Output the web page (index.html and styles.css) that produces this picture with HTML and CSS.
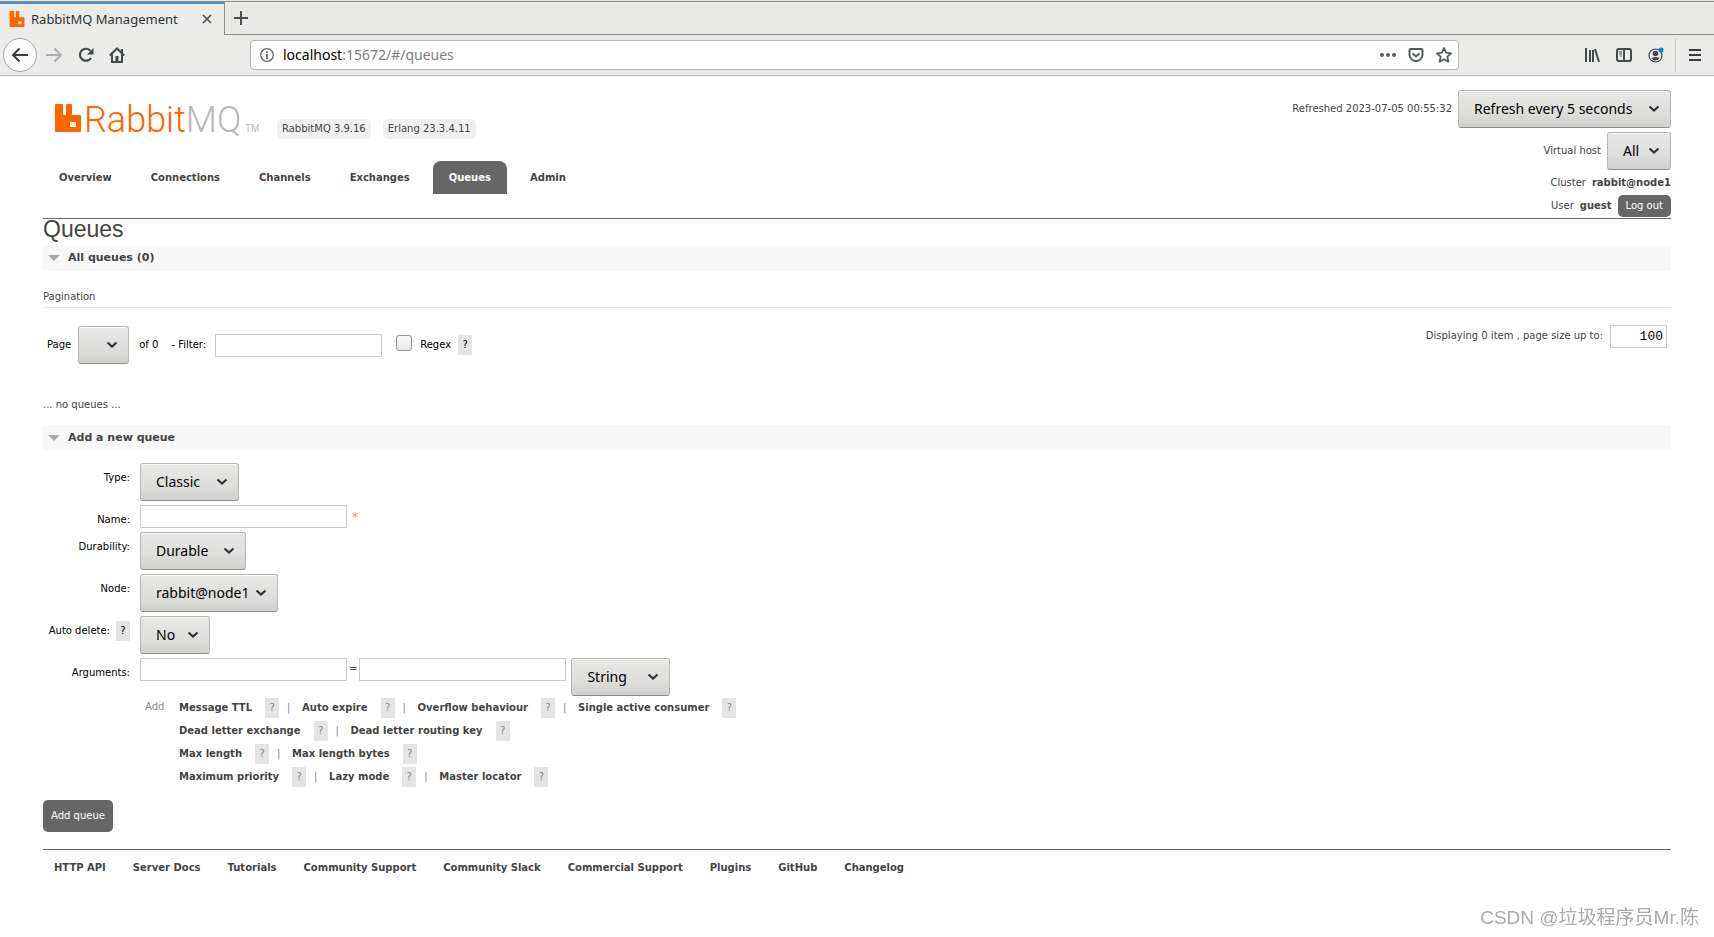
FILE: index.html
```html
<!DOCTYPE html>
<html lang="en">
<head>
  <meta charset="utf-8">
  <title>RabbitMQ Management</title>
  <link rel="stylesheet" href="styles.css">
</head>
<body>
  <!-- shared symbols -->
  <svg class="symbols" width="0" height="0">
    <symbol id="chevron" viewBox="0 0 12 8">
      <path d="M1.5 1.5 L6 5.5 L10.5 1.5" fill="none" stroke="#2e3436" stroke-width="2.2"/>
    </symbol>
    <symbol id="rabbit" viewBox="0 0 26 28">
      <path fill="#f60" fill-rule="evenodd" d="M1 0h6q1 0 1 1v9q0 1 1 1h1q1 0 1-1V1q0-1 1-1h4q1 0 1 1v9q0 1 1 1h7q1 0 1 1v15q0 1-1 1H1q-1 0-1-1V1q0-1 1-1zM16 18q-1 0-1 1v3q0 1 1 1h4q1 0 1-1v-3q0-1-1-1z"/>
    </symbol>
  </svg>

  <div class="browser">
    <div class="tab-strip">
      <div class="browser-tab">
        <svg width="16" height="16"><use href="#rabbit"/></svg>
        <span class="browser-tab-title">RabbitMQ Management</span>
        <button class="icon-button" aria-label="Close tab">
          <svg width="10" height="10"><path d="M1 1l8 8M9 1l-8 8" stroke="#4a4f50" stroke-width="1.6"/></svg>
        </button>
      </div>
      <button class="icon-button new-tab" aria-label="New tab">
        <svg width="14" height="14"><path d="M7 0v14M0 7h14" stroke="#4a4f50" stroke-width="2"/></svg>
      </button>
    </div>
    <div class="toolbar">
      <div class="toolbar-nav">
        <button class="icon-button back" aria-label="Back">
          <svg width="18" height="16"><path d="M17 8H2M8.500 1.500L2 8l6.500 6.500" fill="none" stroke="#393f41" stroke-width="2"/></svg>
        </button>
        <button class="icon-button" aria-label="Forward">
          <svg width="18" height="16"><path d="M1 8h15M9.500 1.500L16 8l-6.500 6.500" fill="none" stroke="#acaeae" stroke-width="2"/></svg>
        </button>
        <button class="icon-button" aria-label="Reload">
          <svg width="16" height="16"><path d="M12.500 3.800A6 6 0 1 0 13 11" fill="none" stroke="#44494b" stroke-width="2.200"/><path d="M15.500 1v6.500H9z" fill="#44494b"/></svg>
        </button>
        <button class="icon-button" aria-label="Home">
          <svg width="16" height="16"><path d="M0.800 8.500L8 1.500l7.200 7M3 7.500V15h10V7.500" fill="none" stroke="#44494b" stroke-width="2"/><path d="M6.500 9h3v5h-3z" fill="#44494b"/><path d="M12 2h2v4h-2z" fill="#44494b"/></svg>
        </button>
      </div>
      <div class="url-bar">
        <svg width="14" height="14"><circle cx="7" cy="7" r="6.300" fill="none" stroke="#666" stroke-width="1.300"/><path d="M7 6v5M7 3.200v1.800" stroke="#666" stroke-width="1.800"/></svg>
        <span class="url"><span class="url-host">localhost</span>:15672/#/queues</span>
        <svg width="16" height="16" fill="#555b5d"><circle cx="2" cy="8" r="2"/><circle cx="8" cy="8" r="2"/><circle cx="14" cy="8" r="2"/></svg>
        <svg width="16" height="16" fill="none" stroke="#555b5d" stroke-width="2"><path d="M2.500 2h11q1 0 1 1v4.500a6.500 6.500 0 0 1-13 0V3q0-1 1-1z"/><path d="M4.500 6.500L8 9.500l3.500-3"/></svg>
        <svg width="16" height="16" fill="none" stroke="#555b5d" stroke-width="1.800" stroke-linejoin="round"><path d="M8 1l2.100 4.700 5 .6-3.700 3.400 1 5L8 12.200l-4.400 2.500 1-5L.9 6.300l5-.6z"/></svg>
      </div>
      <div class="toolbar-tools">
        <button class="icon-button" aria-label="Library">
          <svg width="16" height="16" stroke="#44494b" stroke-width="2"><path d="M2 1v14M6 3v12M9 3v12M11 2l4 13"/></svg>
        </button>
        <button class="icon-button" aria-label="Sidebars">
          <svg width="16" height="16" fill="none" stroke="#44494b" stroke-width="2"><rect x="1" y="2" width="14" height="12" rx="2"/><path d="M8 2v12"/><path d="M3 5h3M3 7h3M4 9h2" stroke-width="1"/></svg>
        </button>
        <button class="icon-button" aria-label="Account">
          <svg width="16" height="16"><circle cx="7.500" cy="8.500" r="6.500" fill="none" stroke="#44494b" stroke-width="1.200"/><circle cx="7.500" cy="6.500" r="2.800" fill="#44494b"/><path d="M3.500 11q4-2 8 0-1.500 2.500-4 2.500T3.500 11z" fill="#44494b"/><circle cx="13" cy="3" r="2.600" fill="#0a84ff"/></svg>
        </button>
        <button class="icon-button menu" aria-label="Menu">
          <svg width="12" height="12"><path d="M0 1h12M0 6h12M0 11h12" stroke="#393f41" stroke-width="2"/></svg>
        </button>
      </div>
    </div>
  </div>

  <div class="page">
    <header class="header">
      <div class="header-main">
        <div class="brand">
          <svg class="logo" width="206" height="42" role="img" aria-label="RabbitMQ">
            <use href="#rabbit" y="5" width="26" height="28"/>
            <text class="logo-text" x="29" y="33">Rabbit<tspan class="logo-mq">MQ</tspan></text>
            <text class="logo-tm" x="190" y="33">TM</text>
          </svg>
          <span class="version">RabbitMQ 3.9.16</span>
          <span class="version">Erlang 23.3.4.11</span>
        </div>
        <nav class="tabs">
          <a href="#/">Overview</a>
          <a href="#/connections">Connections</a>
          <a href="#/channels">Channels</a>
          <a href="#/exchanges">Exchanges</a>
          <a href="#/queues" class="selected">Queues</a>
          <a href="#/users">Admin</a>
        </nav>
      </div>
      <div class="status">
        <div class="status-row">
          <label for="update-every">Refreshed 2023-07-05 00:55:32</label>
          <span class="select refresh"><select id="update-every"><option>Refresh every 5 seconds</option></select><svg><use href="#chevron"/></svg></span>
        </div>
        <div class="status-row">
          <label for="show-vhost">Virtual host</label>
          <span class="select vhost"><select id="show-vhost"><option>All</option></select><svg><use href="#chevron"/></svg></span>
        </div>
        <div class="status-row cluster">Cluster <b>rabbit@node1</b></div>
        <div class="status-row user">User <b>guest</b> <button class="button logout">Log out</button></div>
      </div>
    </header>

    <main>
      <h1>Queues</h1>
      <h2>All queues (0)</h2>
      <h3>Pagination</h3>
      <div class="pagination">
        <div class="filter">
          <label for="page">Page</label>
          <span class="select page-number"><select id="page"><option></option></select><svg><use href="#chevron"/></svg></span>
          <span class="of">of 0</span>
          <label for="filter" class="filter-label">- Filter:</label>
          <input type="text" id="filter" class="filter-input">
          <input type="checkbox" id="regex">
          <label for="regex">Regex</label>
          <span class="help">?</span>
        </div>
        <div class="page-size">
          <label for="page-size">Displaying 0 item , page size up to:</label>
          <input type="text" id="page-size" value="100">
        </div>
      </div>
      <p class="empty">... no queues ...</p>

      <h2>Add a new queue</h2>
      <form>
        <div class="fields">
          <label for="type">Type:</label>
          <div><span class="select medium"><select id="type"><option>Classic</option></select><svg><use href="#chevron"/></svg></span></div>

          <label for="name">Name:</label>
          <div class="field"><input type="text" id="name"><span class="mand">*</span></div>

          <label for="durable">Durability:</label>
          <div><span class="select durable"><select id="durable"><option>Durable</option></select><svg><use href="#chevron"/></svg></span></div>

          <label for="node">Node:</label>
          <div><span class="select node"><select id="node"><option>rabbit@node1</option></select><svg><use href="#chevron"/></svg></span></div>

          <div class="label-help"><label for="auto-delete">Auto delete:</label><span class="help">?</span></div>
          <div><span class="select auto-delete"><select id="auto-delete"><option>No</option></select><svg><use href="#chevron"/></svg></span></div>

          <label for="arg-key">Arguments:</label>
          <div>
            <div class="field arguments">
              <input type="text" id="arg-key">
              <span class="equals">=</span>
              <input type="text" aria-label="Argument value">
              <span class="select medium arg-type"><select aria-label="Argument type"><option>String</option></select><svg><use href="#chevron"/></svg></span>
            </div>
            <div class="presets">
              <span class="presets-title">Add</span>
              <div class="preset-rows">
                <div class="preset-row">
                  <a href="#">Message TTL</a><span class="help">?</span><i>|</i>
                  <a href="#">Auto expire</a><span class="help">?</span><i>|</i>
                  <a href="#">Overflow behaviour</a><span class="help">?</span><i>|</i>
                  <a href="#">Single active consumer</a><span class="help">?</span>
                </div>
                <div class="preset-row">
                  <a href="#">Dead letter exchange</a><span class="help">?</span><i>|</i>
                  <a href="#">Dead letter routing key</a><span class="help">?</span>
                </div>
                <div class="preset-row">
                  <a href="#">Max length</a><span class="help">?</span><i>|</i>
                  <a href="#">Max length bytes</a><span class="help">?</span>
                </div>
                <div class="preset-row">
                  <a href="#">Maximum priority</a><span class="help">?</span><i>|</i>
                  <a href="#">Lazy mode</a><span class="help">?</span><i>|</i>
                  <a href="#">Master locator</a><span class="help">?</span>
                </div>
              </div>
            </div>
          </div>
        </div>
        <button type="button" class="button add-queue">Add queue</button>
      </form>
    </main>

    <footer class="footer">
      <a href="#">HTTP API</a>
      <a href="#">Server Docs</a>
      <a href="#">Tutorials</a>
      <a href="#">Community Support</a>
      <a href="#">Community Slack</a>
      <a href="#">Commercial Support</a>
      <a href="#">Plugins</a>
      <a href="#">GitHub</a>
      <a href="#">Changelog</a>
    </footer>
  </div>

  <div class="watermark">CSDN @垃圾程序员Mr.陈</div>
</body>
</html>
```
FILE: styles.css
```css
* {
  box-sizing: border-box;
}

body {
  margin: 0;
  background: #fff;
  color: #444;
  font: 10px/14px "DejaVu Sans", Verdana, sans-serif;
}

svg {
  flex: none;
}

a {
  color: #444;
  font-weight: bold;
  text-decoration: none;
}

.symbols {
  position: absolute;
}

/* browser window */
.browser {
  background: #ebebea;
  border-bottom: 1px solid #b5b5b3;
  color: #2e3436;
  font: 14px/20px "Noto Sans", sans-serif;
}

.tab-strip {
  display: flex;
  height: 35px;
  padding-top: 1px;
  background: #e8e8e6;
}

.browser-tab {
  display: flex;
  align-items: center;
  gap: 6px;
  width: 225px;
  padding: 0 12px 0 9px;
  border-top: 1px solid #8b8e88;
  border-right: 1px solid #8b8e88;
  background: #ebebea;
  box-shadow: inset 0 2px #4a90d9;
}

.browser-tab-title {
  flex: 1;
  font-size: 13px;
  white-space: nowrap;
}

.icon-button {
  display: flex;
  align-items: center;
  justify-content: center;
  padding: 0;
  border: none;
  background: none;
}

.new-tab {
  flex: 1;
  justify-content: flex-start;
  padding-left: 9px;
  border-top: 1px solid #8b8e88;
  border-bottom: 1px solid #8b8e88;
}

.toolbar {
  display: flex;
  align-items: center;
  height: 40px;
}

.toolbar-nav {
  display: flex;
  align-items: center;
  gap: 15px;
  width: 250px;
  padding-left: 3px;
}

.toolbar-nav .back {
  width: 34px;
  height: 34px;
  margin-right: -7px;
  border: 1px solid #a5a5a3;
  border-radius: 50%;
  background: #fbfbfb;
}

.url-bar {
  display: flex;
  flex: 1;
  align-items: center;
  gap: 12px;
  height: 30px;
  padding: 0 6px 0 9px;
  border: 1px solid #b5b5b3;
  border-radius: 4px;
  background: #fff;
}

.url {
  flex: 1;
  margin-left: -3px;
  color: #808080;
}

.url-host {
  color: #000;
}

.toolbar-tools {
  display: flex;
  align-items: center;
  justify-content: flex-end;
  gap: 16px;
  width: 255px;
  padding-right: 13px;
}

.toolbar-tools .menu {
  height: 34px;
  margin-left: -5px;
  padding-left: 13px;
  border-left: 1px solid #cfcfcd;
}

/* controls */
.select {
  position: relative;
  display: inline-block;
  vertical-align: top;
}

.select select {
  display: block;
  appearance: none;
  width: 100%;
  height: 38px;
  padding: 0 0 2px 15px;
  border: 1px solid #b6b6b3;
  border-bottom-color: #91918c;
  border-radius: 3px;
  background: linear-gradient(#e8e8e7, #dededc 60%, #d0d0ce);
  box-shadow: inset 0 1px #f8f8f7;
  color: #000;
  font: 14px "Noto Sans", sans-serif;
}

.select svg {
  position: absolute;
  top: 15px;
  right: 11px;
  width: 12px;
  height: 8px;
  pointer-events: none;
}

.select.refresh { width: 213px; }
.select.vhost { width: 64px; }
.select.page-number { width: 51px; }
.select.medium { width: 99px; }
.select.durable { width: 106px; }
.select.node { width: 138px; }
.select.auto-delete { width: 70px; }

input[type="text"] {
  width: 207px;
  height: 23px;
  padding: 3px;
  border: 1px solid #ccc;
  font: 13px "Liberation Mono", monospace;
}

input[type="checkbox"] {
  appearance: none;
  width: 16px;
  height: 16px;
  margin: 0 1px 4px 7px;
  border: 1px solid #91918c;
  border-radius: 3px;
  background: linear-gradient(#fbfbfb, #e8e8e7);
}

.button {
  border: none;
  border-radius: 5px;
  background: #666;
  color: #fff;
  font: inherit;
}

.help {
  width: 14px;
  background: #e4e4e4;
  line-height: 20px;
  text-align: center;
}

/* header */
.page {
  padding: 0 43px;
}

.header {
  display: flex;
  justify-content: space-between;
  border-bottom: 1px solid #666;
}

.header-main {
  padding: 23px 0 24px;
}

.brand {
  display: flex;
  align-items: flex-end;
  gap: 12px;
  padding-left: 12px;
}

.logo {
  margin: 0 4px -2px 0;
}

.logo-text {
  fill: #f60;
  font: 300 36px Roboto, sans-serif;
}

.logo-mq {
  fill: #b8b8b8;
}

.logo-tm {
  fill: #b8b8b8;
  font: 10px "Liberation Sans", sans-serif;
}

.version {
  padding: 3px 5px;
  border-radius: 5px;
  background: #f0f0f0;
}

.tabs {
  display: flex;
  gap: 7px;
  margin-top: 22px;
}

.tabs a {
  padding: 10px 16px 9px;
  border-radius: 8px 8px 0 0;
  line-height: 14px;
}

.tabs .selected {
  background: #666;
  color: #fff;
}

.status {
  display: flex;
  flex-direction: column;
  align-items: flex-end;
  gap: 4px;
  padding: 14px 0 1px;
}

.status-row {
  display: flex;
  align-items: center;
  gap: 6px;
}

.cluster {
  height: 17px;
}

.logout {
  height: 22px;
  padding: 0 8px;
}

/* content */
h1 {
  margin: 0 0 5px;
  font: 23px/21px "Liberation Sans", Arial, sans-serif;
}

h2 {
  display: flex;
  align-items: center;
  gap: 8px;
  margin: 0;
  padding: 6px 5px;
  background: #f8f8f8;
  font-size: 11px;
  line-height: 14px;
}

h2::before {
  content: "";
  border: 6px solid transparent;
  border-top-color: #aaa;
  border-bottom: none;
}

h3 {
  margin: 19px 0 18px;
  padding-bottom: 3px;
  border-bottom: 1px solid #e4e4e4;
  font-size: 10px;
  font-weight: normal;
}

.pagination {
  display: flex;
  justify-content: space-between;
}

.filter {
  display: flex;
  align-items: center;
  gap: 7px;
  padding-left: 4px;
  color: #000;
}

.of {
  margin: 0 6px 0 3px;
}

.filter .filter-input {
  width: 167px;
  margin-left: 2px;
}

.page-size {
  display: flex;
  align-items: center;
  gap: 7px;
  height: 20px;
  padding-right: 4px;
}

.page-size input[type="text"] {
  width: 57px;
  text-align: right;
}

.empty {
  margin: 34px 0 13px;
}

form {
  padding: 12px 0 17px;
}

.fields {
  display: grid;
  grid-template-columns: 87px 1fr;
  gap: 4px 10px;
}

.fields label {
  padding-top: 8px;
  color: #000;
  text-align: right;
}

.field {
  display: flex;
  gap: 5px;
}

.mand {
  padding-top: 5px;
  color: #f88;
  font-size: 13px;
}

.arguments {
  gap: 2px;
}

.equals {
  padding-top: 4px;
}

.arg-type {
  margin-left: 3px;
}

.label-help {
  display: flex;
  align-items: flex-start;
  justify-content: flex-end;
  gap: 6px;
  color: #000;
  white-space: nowrap;
}

.label-help .help {
  margin-top: 5px;
}

.presets {
  display: flex;
  gap: 14px;
  padding: 2px 0 0 5px;
  color: #888;
}

.presets-title {
  width: 20px;
  padding-top: 2px;
}

.preset-rows {
  display: grid;
  gap: 3px;
}

.preset-row {
  display: flex;
  align-items: center;
}

.preset-row .help {
  margin-left: 13px;
}

.preset-row i {
  width: 23px;
  font-style: normal;
  padding-left: 8px;
}

.add-queue {
  height: 32px;
  margin-top: 13px;
  padding: 0 8px;
}

/* footer */
.footer {
  display: flex;
  gap: 27px;
  padding: 11px;
  border-top: 1px solid #666;
}

.watermark {
  position: fixed;
  right: 15px;
  bottom: 5px;
  color: #aaa;
  font: 19px/28px "Liberation Sans", "Noto Sans CJK SC", sans-serif;
}
```
